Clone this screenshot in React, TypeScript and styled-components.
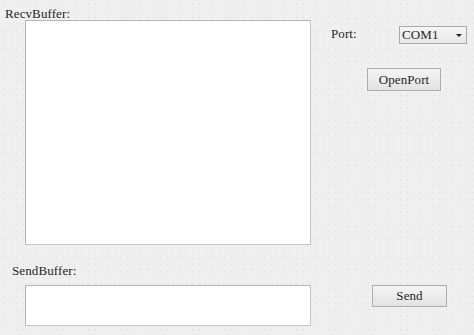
import React from 'react';
import styled, { createGlobalStyle } from 'styled-components';

const GlobalStyle = createGlobalStyle`
  html, body {
    margin: 0;
    padding: 0;
  }
  body {
    font-family: "Liberation Serif", "Noto Sans CJK SC", serif;
    font-size: 13px;
    letter-spacing: 0.1px;
  }
`;

const Form = styled.div`
  width: 474px;
  height: 335px;
  box-sizing: border-box;
  background-color: #efefef;
  background-image: radial-gradient(circle, #cfcfcf 0.7px, transparent 0.9px);
  background-size: 6.5px 6.5px;
  background-position: 1px 1px;
  display: grid;
  grid-template-columns: 311px 1fr;
  overflow: hidden;
  color: #262626;
`;

const Column = styled.div`
  display: flex;
  flex-direction: column;
`;

const Label = styled.div<{ $indent: number; $top: number }>`
  margin-left: ${(p) => p.$indent}px;
  margin-top: ${(p) => p.$top}px;
  height: 12px;
  line-height: 12px;
  white-space: nowrap;
`;

const TextBox = styled.div<{ $height: number; $top: number }>`
  margin-left: 25px;
  margin-top: ${(p) => p.$top}px;
  width: 286px;
  height: ${(p) => p.$height}px;
  box-sizing: border-box;
  background: #ffffff;
  border: 1px solid #c4c4c4;
  border-top-color: #b4b4b4;
  border-left-color: #b4b4b4;
`;

const PortRow = styled.div`
  display: flex;
  align-items: center;
  margin-top: 26px;
  height: 18px;
`;

const PortLabel = styled.span`
  margin-left: 20px;
  width: 68px;
  margin-top: -3px;
`;

const Combo = styled.div`
  width: 68px;
  height: 18px;
  box-sizing: border-box;
  display: flex;
  align-items: center;
  justify-content: space-between;
  padding: 0 4px 0 2px;
  background: linear-gradient(#f6f6f6, #e8e8e8);
  border: 1px solid #a9a9a9;
`;

const Caret = styled.span`
  width: 0;
  height: 0;
  border-left: 3px solid transparent;
  border-right: 3px solid transparent;
  border-top: 3px solid #222;
`;

const Button = styled.div<{ $indent: number; $width: number; $height: number }>`
  margin-left: ${(p) => p.$indent}px;
  width: ${(p) => p.$width}px;
  height: ${(p) => p.$height}px;
  box-sizing: border-box;
  display: flex;
  align-items: center;
  justify-content: center;
  background: linear-gradient(#f4f4f4, #e3e3e3);
  border: 1px solid #adadad;
`;

const Gap = styled.div<{ $size?: number }>`
  flex: ${(p) => (p.$size === undefined ? '1' : 'none')};
  height: ${(p) => (p.$size === undefined ? 'auto' : `${p.$size}px`)};
`;

export default function App() {
  return (
    <>
      <GlobalStyle />
      <Form>
        <Column>
          <Label $indent={5} $top={8}>RecvBuffer:</Label>
          <TextBox $top={0} $height={225} />
          <Label $indent={12} $top={20}>SendBuffer:</Label>
          <TextBox $top={8} $height={41} />
        </Column>
        <Column>
          <PortRow>
            <PortLabel>Port:</PortLabel>
            <Combo>
              COM1
              <Caret />
            </Combo>
          </PortRow>
          <Gap $size={24} />
          <Button $indent={56} $width={74} $height={23}>OpenPort</Button>
          <Gap />
          <Button $indent={61} $width={75} $height={22}>Send</Button>
          <Gap $size={28} />
        </Column>
      </Form>
    </>
  );
}
